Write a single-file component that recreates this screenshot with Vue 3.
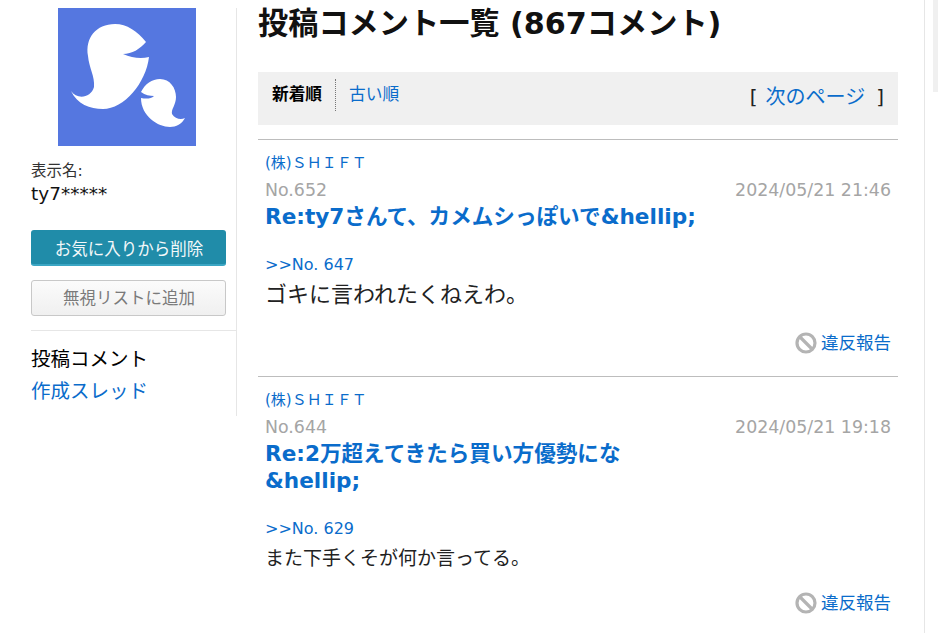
<template>
  <div class="page">
    <div class="wrap">
      <aside class="side">
        <div class="avatar">
          <svg width="138" height="138" viewBox="0 0 138 138">
            <rect width="138" height="138" fill="#5577e0" />
            <path d="M88 34 C79 23 69 16 57 16 C38 16 27 30 30 48 C31 60 37 68 36 79 C33 90 19 92 13 83 C19 96 32 101 45 101 C66 101 88 75 91 49 C83 51 74 50 65 46 C74 46 82 41 88 34 Z" fill="#fff" />
            <path d="M83 84 C87 76 94 71 102 71 C112 71 118 80 118 89 C118 97 113 101 114 106 C117 111 123 112 127 110 C124 116 118 119 112 119 C100 119 83 108 83 90 C88 91 93 91 96 88 C92 88 87 87 83 84 Z" fill="#fff" />
          </svg>
        </div>
        <div class="profile">
          <div class="label">表示名:</div>
          <div class="name">ty7*****</div>
        </div>
        <button class="btn btn-del">お気に入りから削除</button>
        <button class="btn btn-ignore">無視リストに追加</button>
        <ul class="menu">
          <li class="current">投稿コメント</li>
          <li><a>作成スレッド</a></li>
        </ul>
      </aside>
      <main class="main">
        <h1 class="title">投稿コメント一覧 (867コメント)</h1>
        <div class="sortbar">
          <div class="sorts">
            <span class="sort-on">新着順</span>
            <a class="sort-off">古い順</a>
          </div>
          <div class="pager"><span>[</span><a>次のページ</a><span>]</span></div>
        </div>
        <article v-for="c in comments" :key="c.no" class="comment">
          <a class="thread">(株)ＳＨＩＦＴ</a>
          <div class="meta">
            <span>No.{{ c.no }}</span>
            <span>{{ c.date }}</span>
          </div>
          <h2 class="subject">{{ c.subject }}</h2>
          <a class="anchor">&gt;&gt;No. {{ c.anchor }}</a>
          <p class="body" :class="{ large: c.large }">{{ c.body }}</p>
          <div class="report">
            <svg width="22" height="22" viewBox="0 0 22 22">
              <circle cx="11" cy="11" r="9" fill="none" stroke="#b4b4b4" stroke-width="3.2" />
              <path d="M5 5 L17 17" stroke="#b4b4b4" stroke-width="3.2" />
            </svg>
            <a>違反報告</a>
          </div>
        </article>
      </main>
    </div>
    <div class="scroll"><div class="thumb"></div></div>
  </div>
</template>

<script setup>
const comments = [
  {
    no: 652,
    date: '2024/05/21 21:46',
    subject: 'Re:ty7さんて、カメムシっぽいで&hellip;',
    anchor: 647,
    body: 'ゴキに言われたくねえわ。',
    large: true
  },
  {
    no: 644,
    date: '2024/05/21 19:18',
    subject: 'Re:2万超えてきたら買い方優勢にな&hellip;',
    anchor: 629,
    body: 'また下手くそが何か言ってる。',
    large: false
  }
]
</script>

<style>
html,
body {
  margin: 0;
  height: 100%;
  overflow: hidden;
  background: #fff;
}
</style>

<style scoped>
.page {
  display: flex;
  height: 633px;
  overflow: hidden;
  font-family: "DejaVu Sans", "Noto Sans CJK JP", sans-serif;
  color: #222;
}
.wrap {
  display: flex;
  align-items: flex-start;
  width: 925px;
  border-right: 1px solid #e6e6e6;
  padding-top: 8px;
  box-sizing: border-box;
}
.side {
  width: 237px;
  flex: none;
  box-sizing: border-box;
  height: 408px;
  padding-left: 31px;
  border-right: 1px solid #e6e6e6;
}
.avatar {
  margin-left: 27px;
  height: 138px;
}
.avatar svg {
  display: block;
}
.profile {
  margin-top: 14px;
}
.label {
  font-size: 15.5px;
  line-height: 22px;
  color: #333;
}
.name {
  font-size: 18.5px;
  line-height: 24px;
  color: #111;
}
.btn {
  display: block;
  width: 195px;
  height: 36px;
  padding: 0 0 0 1px;
  border-radius: 3px;
  font-family: inherit;
  font-size: 16.5px;
  line-height: 32px;
}
.btn-del {
  margin-top: 24px;
  padding-top: 4px;
  background: #208ca9;
  border: 0;
  border-bottom: 2px solid #3ba6c4;
  color: #f4f8fa;
}
.btn-ignore {
  margin-top: 14px;
  padding-top: 1px;
  background: linear-gradient(#fbfbfb, #f0f0f0);
  border: 1px solid #c8c8c8;
  color: #7a7a7a;
}
.menu {
  list-style: none;
  margin: 14px 0 0;
  padding: 13px 0 0;
  border-top: 1px solid #e6e6e6;
  font-size: 19.5px;
  line-height: 32px;
}
.menu .current {
  color: #000;
}
a {
  color: #0a6ccb;
}
.main {
  flex: none;
  width: 640px;
  margin-left: 21px;
}
.title {
  margin: 0;
  font-size: 30.2px;
  line-height: 32px;
  font-weight: 700;
  color: #111;
}
.sortbar {
  display: flex;
  justify-content: space-between;
  margin-top: 32px;
  height: 53px;
  background: #f0f0f0;
}
.sorts {
  display: flex;
  align-items: flex-start;
  padding: 7px 0 0 14px;
  font-size: 16.7px;
}
.sort-on {
  padding-right: 13px;
  height: 32px;
  line-height: 30px;
  font-weight: 700;
  color: #000;
  border-right: 1px dotted #777;
}
.sort-off {
  padding-left: 13px;
  line-height: 30px;
}
.pager {
  display: flex;
  padding: 8px 14px 0 0;
  font-size: 20px;
  line-height: 34px;
  color: #222;
}
.pager a {
  margin: 0 11px 0 8px;
}
.comment {
  margin-top: 20px;
  border-top: 1px solid #bdbdbd;
  padding: 11px 7px 0;
}
.sortbar + .comment {
  margin-top: 14px;
}
.thread {
  display: block;
  font-size: 15px;
  line-height: 24px;
}
.meta {
  display: flex;
  justify-content: space-between;
  margin-top: 2px;
  font-size: 17.4px;
  line-height: 26px;
  color: #a5a5a5;
}
.subject {
  margin: 0;
  width: 440px;
  font-size: 21.6px;
  line-height: 27px;
  font-weight: 700;
  color: #0a6ccb;
}
.anchor {
  display: block;
  margin-top: 23px;
  font-size: 16px;
  line-height: 24px;
}
.body {
  margin: 4px 0 0;
  font-size: 19px;
  line-height: 26px;
  color: #222;
}
.body.large {
  margin-top: 3px;
  margin-bottom: 20px;
  font-size: 22px;
  line-height: 30px;
}
.report {
  display: flex;
  justify-content: flex-end;
  align-items: center;
  gap: 4px;
  margin-top: 19px;
  font-size: 17.5px;
  line-height: 26px;
}
.scroll {
  flex: 1;
  padding: 0 0 0 8px;
}
.thumb {
  height: 92px;
  background: #f0f0f0;
}
</style>
